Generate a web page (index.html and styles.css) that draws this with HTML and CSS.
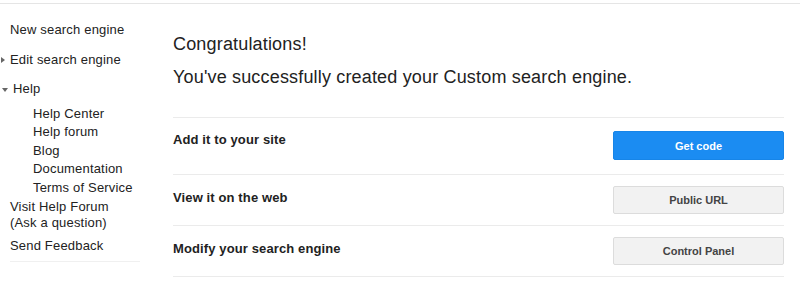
FILE: index.html
```html
<!DOCTYPE html>
<html lang="en">
<head>
  <meta charset="UTF-8">
  <title>Custom Search Engine</title>
  <link rel="stylesheet" href="styles.css">
</head>
<body>

  <div id="top-bar"></div>

  <div id="page">
    <div id="sidebar">
      <ul class="nav">
        <li class="nav-item">New search engine</li>
        <li class="nav-item collapsed">Edit search engine</li>
        <li class="nav-item expanded">Help
          <ul class="subnav">
            <li>Help Center</li>
            <li>Help forum</li>
            <li>Blog</li>
            <li>Documentation</li>
            <li>Terms of Service</li>
          </ul>
        </li>
      </ul>
      <div class="side-link forum-link">Visit Help Forum<br>(Ask a question)</div>
      <div class="side-link feedback-link">Send Feedback</div>
    </div>

    <div id="main">
      <div class="intro">
        <h1>Congratulations!</h1>
        <p>You've successfully created your Custom search engine.</p>
      </div>

      <div class="row row-primary">
        <div class="row-label">Add it to your site</div>
        <button class="btn btn-blue">Get code</button>
      </div>
      <div class="row">
        <div class="row-label">View it on the web</div>
        <button class="btn">Public URL</button>
      </div>
      <div class="row">
        <div class="row-label">Modify your search engine</div>
        <button class="btn">Control Panel</button>
      </div>
    </div>
  </div>

</body>
</html>
```

FILE: styles.css
```css
* {
  margin: 0;
  padding: 0;
  box-sizing: border-box;
  font-family: Arial, 'Liberation Sans', sans-serif;
}

body {
  background: #fff;
  color: #222;
}

#top-bar {
  height: 4px;
  border-bottom: 1px solid #e5e5e5;
}

#page {
  display: flex;
}

/* left nav */
#sidebar {
  width: 140px;
  padding: 18px 0 0 10px;
  font-size: 13px;
  letter-spacing: 0.18px;
}

.nav {
  list-style: none;
}

.nav-item {
  line-height: 16px;
  margin-bottom: 13.5px;
}

.nav-item.expanded {
  margin-bottom: 0;
}

.nav-item.collapsed::before,
.nav-item.expanded::before {
  content: "";
  display: inline-block;
  width: 0;
  height: 0;
  margin-left: -9px;
  margin-right: 5px;
  vertical-align: middle;
}

.nav-item.collapsed::before {
  border-left: 4px solid #666;
  border-top: 3px solid transparent;
  border-bottom: 3px solid transparent;
}

.nav-item.expanded::before {
  border-top: 4px solid #666;
  border-left: 3px solid transparent;
  border-right: 3px solid transparent;
  margin-left: -8px;
  margin-right: 5px;
}

.subnav {
  list-style: none;
  margin-top: 7.5px;
  padding-left: 23px;
  line-height: 18.5px;
}

.side-link {
  line-height: 16px;
}

.forum-link {
  margin-top: 2px;
}

.feedback-link {
  margin-top: 7px;
  padding-bottom: 7px;
  border-bottom: 1px solid #f0f0f0;
}

/* main column */
#main {
  width: 611px;
  margin-left: 33px;
}

.intro {
  padding-top: 29px;
  padding-bottom: 29px;
}

.intro h1 {
  font-size: 18px;
  font-weight: normal;
  line-height: 22px;
  letter-spacing: 0.17px;
}

.intro p {
  font-size: 18px;
  line-height: 22px;
  margin-top: 11px;
  letter-spacing: 0.17px;
}

.row {
  display: flex;
  justify-content: space-between;
  align-items: flex-start;
  padding: 11px 0;
  border-top: 1px solid #ebebeb;
}

.row:last-child {
  border-bottom: 1px solid #ebebeb;
}

.row-primary {
  padding: 13px 0 14px;
}

.row-label {
  font-size: 13px;
  font-weight: bold;
  line-height: 16px;
  padding-top: 4px;
  letter-spacing: 0.12px;
}

.row-primary .row-label {
  padding-top: 1px;
}

.btn {
  width: 171px;
  height: 28px;
  font-size: 11px;
  font-weight: bold;
  color: #444;
  background: #f2f2f2;
  border: 1px solid #dcdcdc;
  border-radius: 2px;
  cursor: pointer;
}

.btn-blue {
  height: 29px;
  color: #fff;
  background: #1b8cf2;
  border-color: #1785e8;
}
```
